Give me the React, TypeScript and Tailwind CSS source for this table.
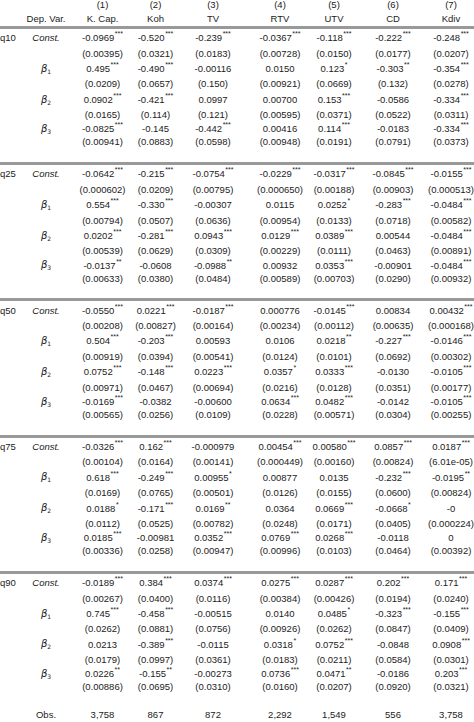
import React from "react";

const W = [
  "w-[22px] justify-start",
  "w-[48px] justify-center",
  "w-[65px] justify-center",
  "w-[41px] justify-center",
  "w-[74px] justify-center",
  "w-[60px] justify-center",
  "w-[48px] justify-center",
  "w-[70px] justify-center",
  "w-[46px] justify-center",
];

function V({ s }: { s: string }) {
  const m = s.match(/^(.*?)(\**)$/);
  const base = m ? m[1] : s;
  const stars = m ? m[2] : "";
  return (
    <>
      {base}
      {stars && (
        <span className="text-[7px] leading-none relative top-[-3px] ml-[0.5px]">{stars}</span>
      )}
    </>
  );
}

function Row({ cells, h }: { cells: React.ReactNode[]; h: string }) {
  return (
    <div className={`flex items-center ${h}`}>
      {cells.map((c, i) => (
        <div key={i} className={`flex shrink-0 whitespace-nowrap ${W[i]}`}>
          {c}
        </div>
      ))}
    </div>
  );
}

function Beta({ n }: { n: number }) {
  return (
    <span className="italic font-['DejaVu_Sans',sans-serif] text-[10px]">
      β<span className="text-[6px] relative top-[2px] not-italic">{n}</span>
    </span>
  );
}

type Block = { q: string; rows: string[][] };

const blocks: Block[] = [
  {
    q: "q10",
    rows: [
      ["-0.0969***", "-0.520***", "-0.239***", "-0.0367***", "-0.118***", "-0.222***", "-0.248***"],
      ["(0.00395)", "(0.0321)", "(0.0183)", "(0.00728)", "(0.0150)", "(0.0177)", "(0.0207)"],
      ["0.495***", "-0.490***", "-0.00116", "0.0150", "0.123*", "-0.303**", "-0.354***"],
      ["(0.0209)", "(0.0657)", "(0.150)", "(0.00921)", "(0.0669)", "(0.132)", "(0.0278)"],
      ["0.0902***", "-0.421***", "0.0997", "0.00700", "0.153***", "-0.0586", "-0.334***"],
      ["(0.0165)", "(0.114)", "(0.121)", "(0.00595)", "(0.0371)", "(0.0522)", "(0.0311)"],
      ["-0.0825***", "-0.145", "-0.442***", "0.00416", "0.114***", "-0.0183", "-0.334***"],
      ["(0.00941)", "(0.0883)", "(0.0598)", "(0.00948)", "(0.0191)", "(0.0791)", "(0.0373)"],
    ],
  },
  {
    q: "q25",
    rows: [
      ["-0.0642***", "-0.215***", "-0.0754***", "-0.0229***", "-0.0317***", "-0.0845***", "-0.0155***"],
      ["(0.000602)", "(0.0209)", "(0.00795)", "(0.000650)", "(0.00188)", "(0.00903)", "(0.000513)"],
      ["0.554***", "-0.330***", "-0.00307", "0.0115", "0.0252*", "-0.283***", "-0.0484***"],
      ["(0.00794)", "(0.0507)", "(0.0636)", "(0.00954)", "(0.0133)", "(0.0718)", "(0.00582)"],
      ["0.0202***", "-0.281***", "0.0943***", "0.0129***", "0.0389***", "0.00544", "-0.0484***"],
      ["(0.00539)", "(0.0629)", "(0.0309)", "(0.00229)", "(0.0111)", "(0.0463)", "(0.00891)"],
      ["-0.0137**", "-0.0608", "-0.0988**", "0.00932", "0.0353***", "-0.00901", "-0.0484***"],
      ["(0.00633)", "(0.0380)", "(0.0484)", "(0.00589)", "(0.00703)", "(0.0290)", "(0.00932)"],
    ],
  },
  {
    q: "q50",
    rows: [
      ["-0.0550***", "0.0221***", "-0.0187***", "0.000776", "-0.0145***", "0.00834", "0.00432***"],
      ["(0.00208)", "(0.00827)", "(0.00164)", "(0.00234)", "(0.00112)", "(0.00635)", "(0.000168)"],
      ["0.504***", "-0.203***", "0.00593", "0.0106", "0.0218**", "-0.227***", "-0.0146***"],
      ["(0.00919)", "(0.0394)", "(0.00541)", "(0.0124)", "(0.0101)", "(0.0692)", "(0.00302)"],
      ["0.0752***", "-0.148***", "0.0223***", "0.0357*", "0.0333***", "-0.0130", "-0.0105***"],
      ["(0.00971)", "(0.0467)", "(0.00694)", "(0.0216)", "(0.0128)", "(0.0351)", "(0.00177)"],
      ["-0.0169***", "-0.0382", "-0.00600", "0.0634***", "0.0482***", "-0.0142", "-0.0105***"],
      ["(0.00565)", "(0.0256)", "(0.0109)", "(0.0228)", "(0.00571)", "(0.0304)", "(0.00255)"],
    ],
  },
  {
    q: "q75",
    rows: [
      ["-0.0326***", "0.162***", "-0.000979", "0.00454***", "0.00580***", "0.0857***", "0.0187***"],
      ["(0.00104)", "(0.0164)", "(0.00141)", "(0.000449)", "(0.00160)", "(0.00824)", "(6.01e-05)"],
      ["0.618***", "-0.249***", "0.00955*", "0.00877", "0.0135", "-0.232***", "-0.0195**"],
      ["(0.0169)", "(0.0765)", "(0.00501)", "(0.0126)", "(0.0155)", "(0.0600)", "(0.00824)"],
      ["0.0188*", "-0.171***", "0.0169**", "0.0364", "0.0669***", "-0.0668*", "-0"],
      ["(0.0112)", "(0.0525)", "(0.00782)", "(0.0248)", "(0.0171)", "(0.0405)", "(0.000224)"],
      ["0.0185***", "-0.00981", "0.0352***", "0.0769***", "0.0268***", "-0.0118", "0"],
      ["(0.00336)", "(0.0258)", "(0.00947)", "(0.00996)", "(0.0103)", "(0.0464)", "(0.00392)"],
    ],
  },
  {
    q: "q90",
    rows: [
      ["-0.0189***", "0.384***", "0.0374***", "0.0275***", "0.0287***", "0.202***", "0.171***"],
      ["(0.00267)", "(0.0400)", "(0.0116)", "(0.00384)", "(0.00426)", "(0.0194)", "(0.0240)"],
      ["0.745***", "-0.458***", "-0.00515", "0.0140", "0.0485*", "-0.323***", "-0.155***"],
      ["(0.0262)", "(0.0881)", "(0.0756)", "(0.00926)", "(0.0262)", "(0.0847)", "(0.0409)"],
      ["0.0213", "-0.389***", "-0.0115", "0.0318*", "0.0752***", "-0.0848", "0.0908***"],
      ["(0.0179)", "(0.0997)", "(0.0361)", "(0.0183)", "(0.0211)", "(0.0584)", "(0.0301)"],
      ["0.0226**", "-0.155**", "-0.00273", "0.0736***", "0.0471**", "-0.0186", "0.203***"],
      ["(0.00886)", "(0.0695)", "(0.0310)", "(0.0160)", "(0.0207)", "(0.0920)", "(0.0321)"],
    ],
  },
];

const labels: (React.ReactNode | null)[] = [
  <span className="italic">Const.</span>,
  null,
  <Beta n={1} />,
  null,
  <Beta n={2} />,
  null,
  <Beta n={3} />,
  null,
];

const heights = [
  "h-[15.4px]",
  "h-[15.4px]",
  "h-[15.4px]",
  "h-[15.4px]",
  "h-[15.4px]",
  "h-[15.4px]",
  "h-[13px]",
  "h-[13px]",
];

export default function App() {
  return (
    <div className="w-[474px] h-[722px] overflow-hidden bg-white text-[#222222] font-['Liberation_Sans',Arial,sans-serif] text-[9.5px] leading-none">
      <div className="mt-[-2px]">
        <Row
          h="h-[14px]"
          cells={["", "", "(1)", "(2)", "(3)", "(4)", "(5)", "(6)", "(7)"]}
        />
        <Row
          h="h-[14px]"
          cells={["", "Dep. Var.", "K. Cap.", "Koh", "TV", "RTV", "UTV", "CD", "Kdiv"]}
        />
      </div>
      {blocks.map((b) => (
        <div key={b.q}>
          <div className="h-[3px] bg-[#999999]" />
          <div className="pt-[1.3px] pb-[13.6px]">
            {b.rows.map((r, i) => (
              <Row
                key={i}
                h={heights[i]}
                cells={[
                  i === 0 ? b.q : "",
                  labels[i] ?? "",
                  ...r.map((s, j) => <V key={j} s={s} />),
                ]}
              />
            ))}
          </div>
        </div>
      ))}
      <Row
        h="h-[15.4px]"
        cells={["", "Obs.", "3,758", "867", "872", "2,292", "1,549", "556", "3,758"]}
      />
    </div>
  );
}
